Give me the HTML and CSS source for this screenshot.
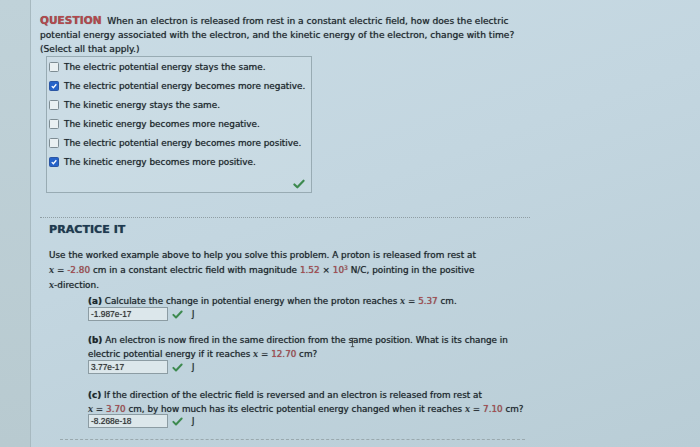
FILE: index.html
```html
<!DOCTYPE html>
<html>
<head>
<meta charset="utf-8">
<link rel="stylesheet" href="styles.css">
</head>
<body>
<div class="page">
  <div class="strip"></div>
  <div class="content">
    <p class="question"><span class="qlabel">QUESTION</span>&nbsp; When an electron is released from rest in a constant electric field, how does the electric<br>potential energy associated with the electron, and the kinetic energy of the electron, change with time?<br>(Select all that apply.)</p>
    <div class="options">
      <div class="opt"><span class="box"></span>The electric potential energy stays the same.</div>
      <div class="opt"><span class="box on"><svg viewBox="0 0 10 10"><path d="M2.2 5.2 L4.2 7.2 L7.9 2.8" fill="none" stroke="#fff" stroke-width="1.6"/></svg></span>The electric potential energy becomes more negative.</div>
      <div class="opt"><span class="box"></span>The kinetic energy stays the same.</div>
      <div class="opt"><span class="box"></span>The kinetic energy becomes more negative.</div>
      <div class="opt"><span class="box"></span>The electric potential energy becomes more positive.</div>
      <div class="opt"><span class="box on"><svg viewBox="0 0 10 10"><path d="M2.2 5.2 L4.2 7.2 L7.9 2.8" fill="none" stroke="#fff" stroke-width="1.6"/></svg></span>The kinetic energy becomes more positive.</div>
      <div class="optfoot"><svg class="tick" viewBox="0 0 14 12"><path d="M1.5 6.5 L5 10 L12.5 2" fill="none" stroke="#3d8a4f" stroke-width="2.6" stroke-linecap="round" stroke-linejoin="round"/></svg></div>
    </div>
    <div class="rule"></div>
    <div class="practice">
      <h2 class="ptitle">PRACTICE IT</h2>
      <p class="intro">Use the worked example above to help you solve this problem. A proton is released from rest at<br><i>x</i> = <span class="num">-2.80</span> cm in a constant electric field with magnitude <span class="num">1.52</span> &times; <span class="num">10<sup>3</sup></span> N/C, pointing in the positive<br><i>x</i>-direction.</p>
      <div class="part">
        <p class="ptext"><b>(a)</b> Calculate the change in potential energy when the proton reaches <i>x</i> = <span class="num">5.37</span> cm.</p>
        <div class="answer"><span class="field">-1.987e-17</span><svg class="tick small" viewBox="0 0 14 12"><path d="M1.5 6.5 L5 10 L12.5 2" fill="none" stroke="#3d8a4f" stroke-width="2.6" stroke-linecap="round" stroke-linejoin="round"/></svg><span class="unit">J</span></div>
      </div>
      <div class="part">
        <p class="ptext"><b>(b)</b> An electron is now fired in the same direction from the same position. What is its change in<br>electric potential energy if it reaches <i>x</i> = <span class="num">12.70</span> cm?</p>
        <div class="answer"><span class="field">3.77e-17</span><svg class="tick small" viewBox="0 0 14 12"><path d="M1.5 6.5 L5 10 L12.5 2" fill="none" stroke="#3d8a4f" stroke-width="2.6" stroke-linecap="round" stroke-linejoin="round"/></svg><span class="unit">J</span></div>
        <svg class="cursor" viewBox="0 0 6 12"><path d="M1 1 H5 M3 1 V11 M1 11 H5" fill="none" stroke="#333" stroke-width="0.9"/></svg>
      </div>
      <div class="part last">
        <p class="ptext"><b>(c)</b> If the direction of the electric field is reversed and an electron is released from rest at<br><i>x</i> = <span class="num">3.70</span> cm, by how much has its electric potential energy changed when it reaches <i>x</i> = <span class="num">7.10</span> cm?</p>
        <div class="answer tight"><span class="field">-8.268e-18</span><svg class="tick small" viewBox="0 0 14 12"><path d="M1.5 6.5 L5 10 L12.5 2" fill="none" stroke="#3d8a4f" stroke-width="2.6" stroke-linecap="round" stroke-linejoin="round"/></svg><span class="unit">J</span></div>
      </div>
      <div class="rule bottom"></div>
    </div>
  </div>
</div>
</body>
</html>
```
FILE: styles.css
```css
html, body {
  margin: 0;
  padding: 0;
  height: 100%;
}
body {
  background: linear-gradient(160deg, #cadce5 0%, #c3d6e0 45%, #b9cdd6 100%);
  font-family: "DejaVu Sans", Verdana, sans-serif;
  color: #1c262c;
  text-shadow: 0 0 0.7px rgba(25, 35, 40, 0.65);
  overflow: hidden;
}
.page {
  display: flex;
  height: 447px;
}
.strip {
  width: 30px;
  flex: none;
  background: linear-gradient(180deg, #c0d2d9, #b8cad0);
  border-right: 1px solid #a7b9c0;
}
.content {
  flex: 1;
  padding-left: 9px;
}
.question {
  margin: 13px 0 0 0;
  font-size: 9.1px;
  line-height: 14px;
  white-space: nowrap;
}
.qlabel {
  color: #b5484c;
  font-weight: bold;
  font-size: 10.6px;
}
.options {
  margin: 0 0 0 6px;
  width: 264px;
  border: 1px solid #98abb3;
  background: rgba(255,255,255,0.08);
}
.opt {
  display: flex;
  align-items: center;
  height: 19px;
  font-size: 8.9px;
  padding-left: 2px;
  white-space: nowrap;
}
.box {
  width: 8px;
  height: 8px;
  border: 1px solid #7d8c93;
  border-radius: 1.5px;
  background: #e9f0f2;
  margin-right: 5px;
  display: inline-flex;
}
.box.on {
  background: #2663c9;
  border-color: #2a55a3;
}
.box svg {
  width: 8px;
  height: 8px;
}
.optfoot {
  display: flex;
  justify-content: flex-end;
  align-items: flex-start;
  box-sizing: border-box;
  height: 21px;
  padding: 8px 6px 0 0;
}
.tick {
  width: 12px;
  height: 10px;
}
.rule {
  margin-top: 24px;
  width: 490px;
  border-top: 1px dotted #8f9ea4;
}
.practice {
  padding-left: 9px;
}
.ptitle {
  margin: 5px 0 0 0;
  font-size: 11.1px;
  line-height: 13px;
  color: #1e3a52;
}
.intro {
  margin: 12px 0 0 0;
  font-size: 8.9px;
  line-height: 15px;
  white-space: nowrap;
}
.num {
  color: #b04a4e;
}
sup {
  font-size: 6px;
  vertical-align: 3px;
  line-height: 0;
}
i {
  font-family: "DejaVu Serif", serif;
  font-size: 9px;
}
.part {
  position: relative;
  margin: 1px 0 0 39px;
}
.part + .part {
  margin-top: 12px;
}
.part.last {
  margin-top: 14px;
}
.ptext {
  margin: 0;
  font-size: 8.8px;
  line-height: 14px;
  white-space: nowrap;
}
.answer {
  display: flex;
  align-items: center;
  height: 14px;
  margin-top: -1px;
}
.answer.tight {
  margin-top: -2px;
}
.field {
  box-sizing: border-box;
  width: 80px;
  height: 14px;
  border: 1px solid #8c9ca3;
  background: #dce7eb;
  font-family: "Liberation Sans", Arial, sans-serif;
  font-size: 8.4px;
  line-height: 12px;
  padding-left: 2px;
  color: #333;
}
.tick.small {
  margin-left: 4px;
  width: 11px;
  height: 9px;
}
.unit {
  margin-left: 9px;
  font-size: 8px;
}
.cursor {
  position: absolute;
  left: 262px;
  top: 3px;
  width: 5px;
  height: 13px;
}
.rule.bottom {
  margin: 11px 0 0 11px;
  width: 465px;
  border-top: 1px dashed #9aa9ae;
}
```
